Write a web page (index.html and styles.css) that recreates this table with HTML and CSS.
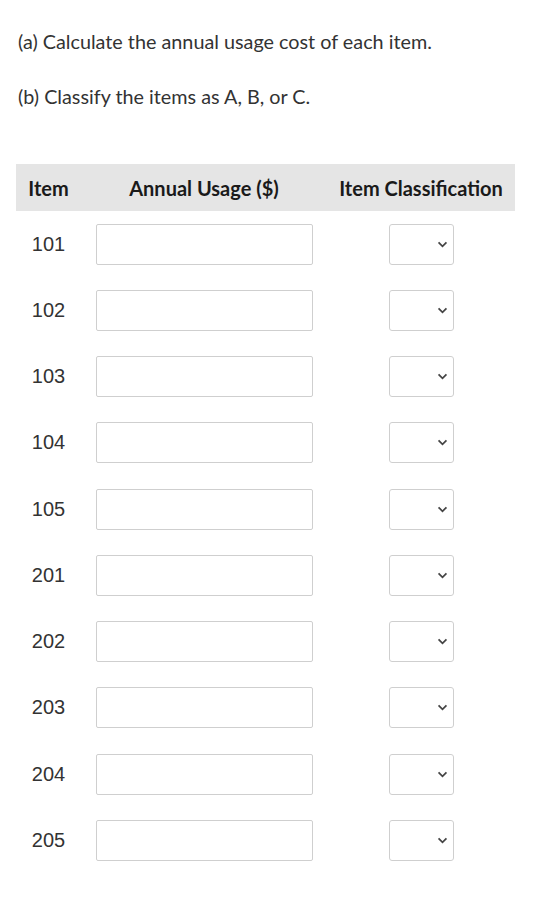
FILE: index.html
```html
<!DOCTYPE html>
<html lang="en">
<head>
    <meta charset="UTF-8">
    <meta name="viewport" content="width=device-width, initial-scale=1.0">
    <title>ABC Classification</title>
    <link rel="stylesheet" href="styles.css">
</head>
<body>
    <div class="question">
        <p class="part">(a) Calculate the annual usage cost of each item.</p>
        <p class="part">(b) Classify the items as A, B, or C.</p>
    </div>

    <table class="abc-table">
        <thead>
            <tr>
                <th class="col-item">Item</th>
                <th class="col-usage">Annual Usage ($)</th>
                <th class="col-class">Item Classification</th>
            </tr>
        </thead>
        <tbody>
            <tr><td class="item-no">101</td><td><input type="text" class="usage-input"></td><td><select class="class-select"><option></option><option>A</option><option>B</option><option>C</option></select></td></tr>
            <tr><td class="item-no">102</td><td><input type="text" class="usage-input"></td><td><select class="class-select"><option></option><option>A</option><option>B</option><option>C</option></select></td></tr>
            <tr><td class="item-no">103</td><td><input type="text" class="usage-input"></td><td><select class="class-select"><option></option><option>A</option><option>B</option><option>C</option></select></td></tr>
            <tr><td class="item-no">104</td><td><input type="text" class="usage-input"></td><td><select class="class-select"><option></option><option>A</option><option>B</option><option>C</option></select></td></tr>
            <tr><td class="item-no">105</td><td><input type="text" class="usage-input"></td><td><select class="class-select"><option></option><option>A</option><option>B</option><option>C</option></select></td></tr>
            <tr><td class="item-no">201</td><td><input type="text" class="usage-input"></td><td><select class="class-select"><option></option><option>A</option><option>B</option><option>C</option></select></td></tr>
            <tr><td class="item-no">202</td><td><input type="text" class="usage-input"></td><td><select class="class-select"><option></option><option>A</option><option>B</option><option>C</option></select></td></tr>
            <tr><td class="item-no">203</td><td><input type="text" class="usage-input"></td><td><select class="class-select"><option></option><option>A</option><option>B</option><option>C</option></select></td></tr>
            <tr><td class="item-no">204</td><td><input type="text" class="usage-input"></td><td><select class="class-select"><option></option><option>A</option><option>B</option><option>C</option></select></td></tr>
            <tr><td class="item-no">205</td><td><input type="text" class="usage-input"></td><td><select class="class-select"><option></option><option>A</option><option>B</option><option>C</option></select></td></tr>
        </tbody>
    </table>
</body>
</html>
```

FILE: styles.css
```css
body {
    margin: 0;
    padding: 0 16px;
    background-color: #fff;
    font-family: Lato, "Open Sans", sans-serif;
    color: #333;
}

.question {
    padding-top: 27px;
}

.part {
    margin: 0 0 27px 2px;
    font-size: 19.8px;
    line-height: 28px;
}

.abc-table {
    margin-top: 54px;
    width: 499px;
    border-collapse: collapse;
}

.abc-table th {
    background-color: #e5e5e5;
    color: #1a1a1a;
    font-size: 20px;
    font-weight: bold;
    height: 47px;
    padding: 0;
    text-align: center;
}

.col-item {
    width: 65px;
}

.col-usage {
    width: 246px;
}

.abc-table td {
    height: 66.25px;
    padding: 0;
    text-align: center;
    vertical-align: middle;
}

.item-no {
    font-family: "Liberation Sans", Arial, sans-serif;
    font-size: 20px;
    color: #333;
}

.usage-input {
    box-sizing: border-box;
    display: block;
    margin: 0 auto;
    width: 217px;
    height: 41px;
    border: 1px solid #cfcfcf;
    border-radius: 2px;
    padding: 0 8px;
    font-size: 16px;
}

.class-select {
    box-sizing: border-box;
    display: block;
    margin: 0 auto;
    width: 65px;
    height: 41px;
    border: 1px solid #cfcfcf;
    border-radius: 3px;
    background-color: #fff;
    -webkit-appearance: none;
    appearance: none;
    background-image: url("data:image/svg+xml;utf8,<svg xmlns='http://www.w3.org/2000/svg' width='12' height='8' viewBox='0 0 12 8'><path d='M1.5 1.5 L6 6 L10.5 1.5' fill='none' stroke='%23444' stroke-width='2'/></svg>");
    background-repeat: no-repeat;
    background-position: right 5px center;
    background-size: 11px 7px;
}
```
